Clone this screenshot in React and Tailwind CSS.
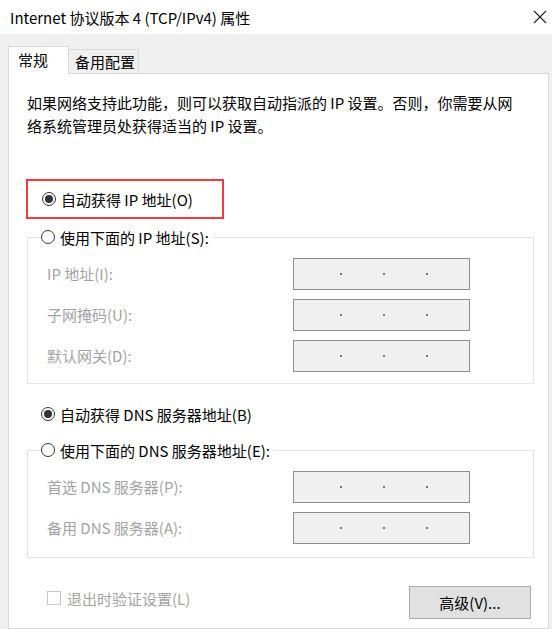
import React from "react";

function Radio({ checked }) {
  return (
    <span className="w-[14px] h-[14px] rounded-full border border-[#333] bg-white flex items-center justify-center shrink-0">
      {checked && <span className="w-[8px] h-[8px] rounded-full bg-[#333]" />}
    </span>
  );
}

function IpBox() {
  return (
    <div className="w-[177px] h-[32px] bg-[#f0f0f0] border border-[#8e8e8e] flex items-center">
      <span className="w-[46px]" />
      <span className="w-[2px] h-[2px] bg-[#777]" />
      <span className="w-[41px]" />
      <span className="w-[2px] h-[2px] bg-[#777]" />
      <span className="w-[41px]" />
      <span className="w-[2px] h-[2px] bg-[#777]" />
    </div>
  );
}

function Row({ label }) {
  return (
    <div className="flex items-center">
      <span className="w-[246px] text-[#a3a3a3] -mt-[2px]">{label}</span>
      <IpBox />
    </div>
  );
}

function Group({ label, rows, topGap, bottomPad }) {
  return (
    <div className="ml-[18px] w-[507px] border border-[#e3e3e3] pl-[19px]" style={{ paddingBottom: bottomPad }}>
      <div className="-mt-[12px] -ml-[6px] h-[22px] w-fit bg-white pr-[4px] flex items-center gap-[5px] text-black">
        <Radio />
        <span>{label}</span>
      </div>
      <div className="flex flex-col gap-[9px]" style={{ marginTop: topGap }}>
        {rows.map((r) => (
          <Row key={r} label={r} />
        ))}
      </div>
    </div>
  );
}

export default function App() {
  return (
    <div
      className="w-[552px] h-[629px] bg-[#f0f0f0] overflow-hidden flex flex-col text-[15px] leading-[23px] text-black"
      style={{ fontFamily: '"Noto Sans CJK SC", "Noto Sans", sans-serif' }}
    >
      <div className="h-[34px] bg-white flex items-center justify-between pl-[10px] pr-[5px] shrink-0">
        <span>Internet 协议版本 4 (TCP/IPv4) 属性</span>
        <svg width="14" height="14" viewBox="0 0 14 14">
          <path d="M1 1 L13 13 M13 1 L1 13" stroke="#222" strokeWidth="1.1" fill="none" />
        </svg>
      </div>

      <div className="h-[39px] flex items-end pl-[8px] shrink-0">
        <div className="w-[61px] h-[28px] bg-white border border-[#d9d9d9] border-b-0 pl-[9px] pt-[1px] relative top-[1px]">
          常规
        </div>
        <div className="w-[70px] h-[24px] bg-[#f0f0f0] border border-[#d9d9d9] border-l-0 border-b-0 pl-[6px] leading-[24px]">
          备用配置
        </div>
      </div>

      <div className="ml-[8px] w-[541px] flex-1 bg-white border border-[#d9d9d9] flex flex-col">
        <p className="pl-[18px] pt-[17px]">
          <span className="block">如果网络支持此功能，则可以获取自动指派的 IP 设置。否则，你需要从网</span>
          <span className="block">络系统管理员处获得适当的 IP 设置。</span>
        </p>

        <div className="mt-[42px] ml-[17px] w-[198px] h-[40px] border-2 border-[#f03c3c] flex items-center pl-[14px] gap-[5px]">
          <Radio checked />
          <span>自动获得 IP 地址(O)</span>
        </div>

        <div className="mt-[18px]">
          <Group label="使用下面的 IP 地址(S):" rows={["IP 地址(I):", "子网掩码(U):", "默认网关(D):"]} topGap={10} bottomPad={11} />
        </div>

        <div className="mt-[19px] ml-[32px] h-[22px] flex items-center gap-[5px]">
          <Radio checked />
          <span>自动获得 DNS 服务器地址(B)</span>
        </div>

        <div className="mt-[25px]">
          <Group label="使用下面的 DNS 服务器地址(E):" rows={["首选 DNS 服务器(P):", "备用 DNS 服务器(A):"]} topGap={10} bottomPad={13} />
        </div>

        <div className="mt-[28px] flex items-center justify-between pl-[38px] pr-[17px]">
          <div className="flex items-center gap-[6px] text-[#a3a3a3] mb-[9px]">
            <span className="w-[14px] h-[14px] border border-[#c8c8c8] bg-white" />
            <span>退出时验证设置(L)</span>
          </div>
          <button className="w-[122px] h-[33px] bg-[#e1e1e1] border border-[#adadad] text-black">
            高级(V)...
          </button>
        </div>
      </div>
    </div>
  );
}
